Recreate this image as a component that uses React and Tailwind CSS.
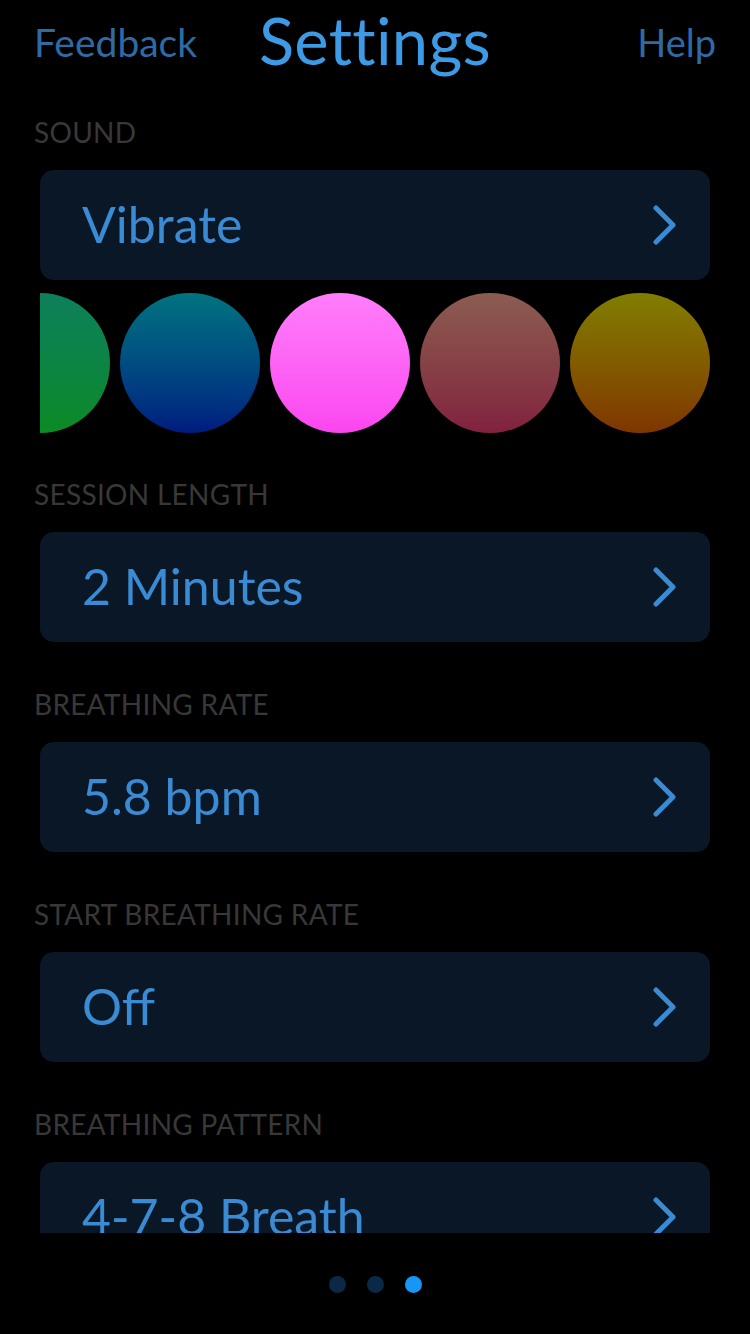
import React from 'react';

const font = { fontFamily: 'Lato, "Noto Sans", sans-serif' };

function Chevron() {
  return (
    <svg width="26" height="40" viewBox="0 0 26 40" className="shrink-0">
      <polyline
        points="4,3 21,20 4,37"
        fill="none"
        stroke="#3a8bd3"
        strokeWidth="5"
        strokeLinecap="round"
        strokeLinejoin="round"
      />
    </svg>
  );
}

function Label({ children, className = '' }) {
  return (
    <div className={`h-[62px] mb-[7px] shrink-0 flex items-center pl-[34px] text-[28px] text-[#383838] tracking-[0.3px] ${className}`}>
      {children}
    </div>
  );
}

function Row({ value }) {
  return (
    <div className="mx-[40px] h-[110px] rounded-[14px] bg-[#0a1727] flex items-center justify-between pl-[42px] pr-[32px] shrink-0">
      <span className="text-[50px] text-[#3a8bd3] leading-none pb-[2px]">{value}</span>
      <Chevron />
    </div>
  );
}

const swatches = [
  'bg-gradient-to-b from-[#0e7f5a] to-[#0c8a22]',
  'bg-gradient-to-b from-[#03737f] to-[#021a80]',
  'bg-gradient-to-b from-[#ff7dfa] to-[#fb45f0]',
  'bg-gradient-to-b from-[#8a5c50] to-[#81213f]',
  'bg-gradient-to-b from-[#7f7e00] to-[#7f3500]',
];

export default function App() {
  return (
    <div className="w-[750px] h-[1334px] bg-black overflow-hidden flex flex-col" style={font}>
      <div className="h-[1233px] overflow-hidden flex flex-col shrink-0">
        {/* header */}
        <div className="h-[101px] shrink-0 relative flex items-start justify-between px-[34px]">
          <span className="mt-[19px] text-[39px] text-[#2e6ba4] leading-[46px]">Feedback</span>
          <span className="absolute left-0 right-0 top-[2px] text-center text-[65px] text-[#3d9be6] leading-[76px] tracking-[0.3px]">Settings</span>
          <span className="mt-[19px] text-[38px] text-[#2e6ba4] leading-[46px]">Help</span>
        </div>

        <Label>SOUND</Label>
        <Row value="Vibrate" />

        <div className="mx-[40px] mt-[13px] h-[140px] overflow-hidden shrink-0">
          <div className="flex gap-[10px] -ml-[70px]">
            {swatches.map((s, i) => (
              <div key={i} className={`w-[140px] h-[140px] rounded-full shrink-0 ${s}`} />
            ))}
          </div>
        </div>

        <Label className="mt-[30px]">SESSION LENGTH</Label>
        <Row value="2 Minutes" />

        <Label className="mt-[31px]">BREATHING RATE</Label>
        <Row value="5.8 bpm" />

        <Label className="mt-[31px]">START BREATHING RATE</Label>
        <Row value="Off" />

        <Label className="mt-[31px]">BREATHING PATTERN</Label>
        <Row value="4-7-8 Breath" />
      </div>

      {/* page dots */}
      <div className="flex justify-center gap-[21px] mt-[43px]">
        <div className="w-[17px] h-[17px] rounded-full bg-[#0b2946]" />
        <div className="w-[17px] h-[17px] rounded-full bg-[#0b2946]" />
        <div className="w-[17px] h-[17px] rounded-full bg-[#1796f5]" />
      </div>
    </div>
  );
}
